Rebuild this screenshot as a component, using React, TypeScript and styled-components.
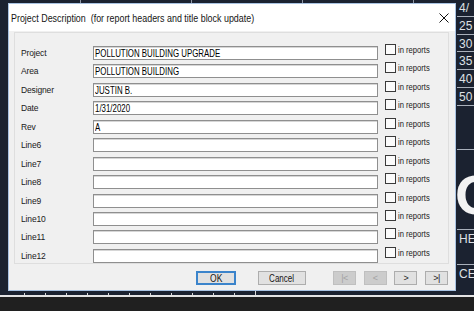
import { Fragment } from 'react';
import styled, { createGlobalStyle } from 'styled-components';

const UI_FONT = `"Liberation Sans", Arial, sans-serif`;

const GlobalStyle = createGlobalStyle`
  html, body { margin: 0; padding: 0; background: #1b2230; }
  body { font-family: ${UI_FONT}; }
`;

const Desktop = styled.div`
  position: relative;
  width: 474px;
  height: 311px;
  overflow: hidden;
  background: #1b2230;
`;

/* the screenshot's dialog text is narrow; squeeze the glyphs horizontally */
const Squeeze = styled.span<{ $sx: number; $center?: boolean }>`
  display: inline-block;
  white-space: nowrap;
  transform: scaleX(${(p) => p.$sx});
  transform-origin: ${(p) => (p.$center ? 'center' : 'left')} center;
`;

/* ---- CAD drawing behind the dialog ---- */

const Floor = styled.div`
  position: absolute;
  left: 0;
  right: 0;
  top: 295px;
  bottom: 0;
  background: #202020;
  border-top: 2px solid #e4e4e4;
`;

const Ruler = styled.div`
  position: absolute;
  left: 24px;
  top: 291px;
  width: 240px;
  height: 4px;
  display: flex;
  gap: 20px;
  align-items: flex-end;
`;

const Tick = styled.span<{ $tall?: boolean }>`
  width: 1px;
  height: ${(p) => (p.$tall ? 4 : 2)}px;
  background: #d8d8d8;
`;

const TopMarks = styled.div`
  position: absolute;
  left: 80px;
  top: 0;
  height: 3px;
  display: flex;
  gap: 110px;
`;

const Mark = styled.span`
  width: 1px;
  height: 3px;
  background: #8e96a4;
`;

const TableColumn = styled.div`
  position: absolute;
  left: 457px;
  top: -1px;
  width: 30px;
  height: 312px;
  display: flex;
  flex-direction: column;
  font-family: ${UI_FONT};
  color: #dde0e5;
`;

const TableCell = styled.div<{ $h: number; $line?: boolean }>`
  height: ${(p) => p.$h}px;
  flex: none;
  box-sizing: border-box;
  border-bottom: ${(p) => (p.$line ? '1px solid #a9b0bb' : 'none')};
  padding-left: 2px;
  font-size: 12px;
  line-height: 18px;
  overflow: hidden;
`;

const BigGlyph = styled.div`
  margin: 0 0 0 -2px;
  font-weight: 700;
  font-size: 56px;
  line-height: 46px;
  height: 46px;
  color: #f2f2f2;
`;

/* ---- dialog ---- */

const Window = styled.div`
  position: absolute;
  left: 8px;
  top: 3px;
  width: 448px;
  height: 288px;
  box-sizing: border-box;
  border: 1px solid #a9c3e2;
  background: #f0f0f0;
  display: flex;
  flex-direction: column;
  font-family: ${UI_FONT};
  color: #000;
`;

const TitleBar = styled.div`
  height: 27px;
  flex: none;
  background: #ffffff;
  display: flex;
  align-items: center;
  padding-left: 2px;
  font-size: 11px;
  color: #151515;
`;

const CloseBox = styled.div`
  margin-left: auto;
  width: 22px;
  height: 27px;
  display: flex;
  align-items: center;
  justify-content: center;
`;

const Body = styled.div`
  flex: 1;
  padding: 1px 6px 0 5px;
  display: flex;
  flex-direction: column;
`;

const Panel = styled.div`
  height: 232px;
  box-sizing: border-box;
  border: 1px solid #dedede;
  padding: 13px 0 0 6px;
  display: grid;
  grid-template-columns: 72px 285px auto;
  grid-auto-rows: 14px;
  row-gap: 4.45px;
`;

const Label = styled.div`
  align-self: center;
  font-size: 8.5px;
  line-height: 12px;
  letter-spacing: -0.15px;
  color: #1a1a1a;
  white-space: nowrap;
`;

const Field = styled.div`
  box-sizing: border-box;
  height: 14px;
  background: #fff;
  border: 1px solid #8f8f8f;
  box-shadow: inset 0 1px 0 #d6d6d6;
  padding-left: 1px;
  font-size: 10.5px;
  line-height: 13px;
  color: #000;
  overflow: hidden;
`;

const ReportToggle = styled.label`
  margin-left: 7px;
  margin-top: -2px;
  display: flex;
  align-items: flex-start;
  gap: 2px;
  font-size: 9.5px;
  line-height: 11px;
  color: #1a1a1a;
`;

const Box = styled.span`
  width: 11px;
  height: 11px;
  box-sizing: border-box;
  border: 1px solid #3a3a3a;
  background: #fbfbfb;
  flex: none;
`;

const ButtonBar = styled.div`
  margin-top: 7px;
  padding-left: 182px;
  display: flex;
  height: 14px;
`;

const Button = styled.div<{ $default?: boolean; $width: number; $gap?: number }>`
  box-sizing: border-box;
  width: ${(p) => p.$width}px;
  height: 14px;
  margin-left: ${(p) => p.$gap ?? 0}px;
  display: flex;
  align-items: center;
  justify-content: center;
  background: #e1e1e1;
  border: ${(p) => (p.$default ? '2px solid #3b84cb' : '1px solid #adadad')};
  font-size: 10px;
  color: #151515;
`;

const NavGroup = styled.div`
  margin-left: 27px;
  display: flex;
  gap: 7.7px;
`;

const NavButton = styled.div<{ $disabled?: boolean }>`
  box-sizing: border-box;
  width: 23px;
  height: 14px;
  display: flex;
  align-items: center;
  justify-content: center;
  background: ${(p) => (p.$disabled ? '#cccccc' : '#e1e1e1')};
  border: 1px solid ${(p) => (p.$disabled ? '#bfbfbf' : '#adadad')};
  font-size: 9px;
  letter-spacing: -0.5px;
  color: ${(p) => (p.$disabled ? '#a3a3a3' : '#222')};
`;

const rows = [
  { label: 'Project', value: 'POLLUTION BUILDING UPGRADE' },
  { label: 'Area', value: 'POLLUTION BUILDING' },
  { label: 'Designer', value: 'JUSTIN B.' },
  { label: 'Date', value: '1/31/2020' },
  { label: 'Rev', value: 'A' },
  { label: 'Line6', value: '' },
  { label: 'Line7', value: '' },
  { label: 'Line8', value: '' },
  { label: 'Line9', value: '' },
  { label: 'Line10', value: '' },
  { label: 'Line11', value: '' },
  { label: 'Line12', value: '' },
];

export default function App() {
  return (
    <>
      <GlobalStyle />
      <Desktop>
        <TopMarks>
          <Mark />
          <Mark />
          <Mark />
          <Mark />
        </TopMarks>

        <TableColumn>
          {['4/', '25', '30', '35', '40', '50'].map((t) => (
            <TableCell key={t} $h={17.8} $line>
              {t}
            </TableCell>
          ))}
          <TableCell $h={44} $line />
          <TableCell $h={22} />
          <BigGlyph>O</BigGlyph>
          <TableCell $h={12} $line />
          <TableCell $h={35} $line>
            HEE
          </TableCell>
          <TableCell $h={30}>CEI</TableCell>
        </TableColumn>

        <Ruler>
          {Array.from({ length: 12 }, (_, i) => (
            <Tick key={i} $tall={i === 11} />
          ))}
        </Ruler>
        <Floor />

        <Window>
          <TitleBar>
            <Squeeze $sx={0.81}>Project Description&nbsp;&nbsp;(for report headers and title block update)</Squeeze>
            <CloseBox>
              <svg width="10" height="10" viewBox="0 0 10 10">
                <path d="M0.5 0.5 L9.5 9.5 M9.5 0.5 L0.5 9.5" stroke="#111" strokeWidth="1" fill="none" />
              </svg>
            </CloseBox>
          </TitleBar>
          <Body>
            <Panel>
              {rows.map((r) => (
                <Fragment key={r.label}>
                  <Label>{r.label}</Label>
                  <Field>
                    <Squeeze $sx={0.75}>{r.value}</Squeeze>
                  </Field>
                  <ReportToggle>
                    <Box />
                    <Squeeze $sx={0.8}>in reports</Squeeze>
                  </ReportToggle>
                </Fragment>
              ))}
            </Panel>
            <ButtonBar>
              <Button $default $width={40}>
                <Squeeze $sx={0.85} $center>OK</Squeeze>
              </Button>
              <Button $width={48} $gap={22}>
                <Squeeze $sx={0.8} $center>Cancel</Squeeze>
              </Button>
              <NavGroup>
                <NavButton $disabled>|&lt;</NavButton>
                <NavButton $disabled>&lt;</NavButton>
                <NavButton>&gt;</NavButton>
                <NavButton>&gt;|</NavButton>
              </NavGroup>
            </ButtonBar>
          </Body>
        </Window>
      </Desktop>
    </>
  );
}
